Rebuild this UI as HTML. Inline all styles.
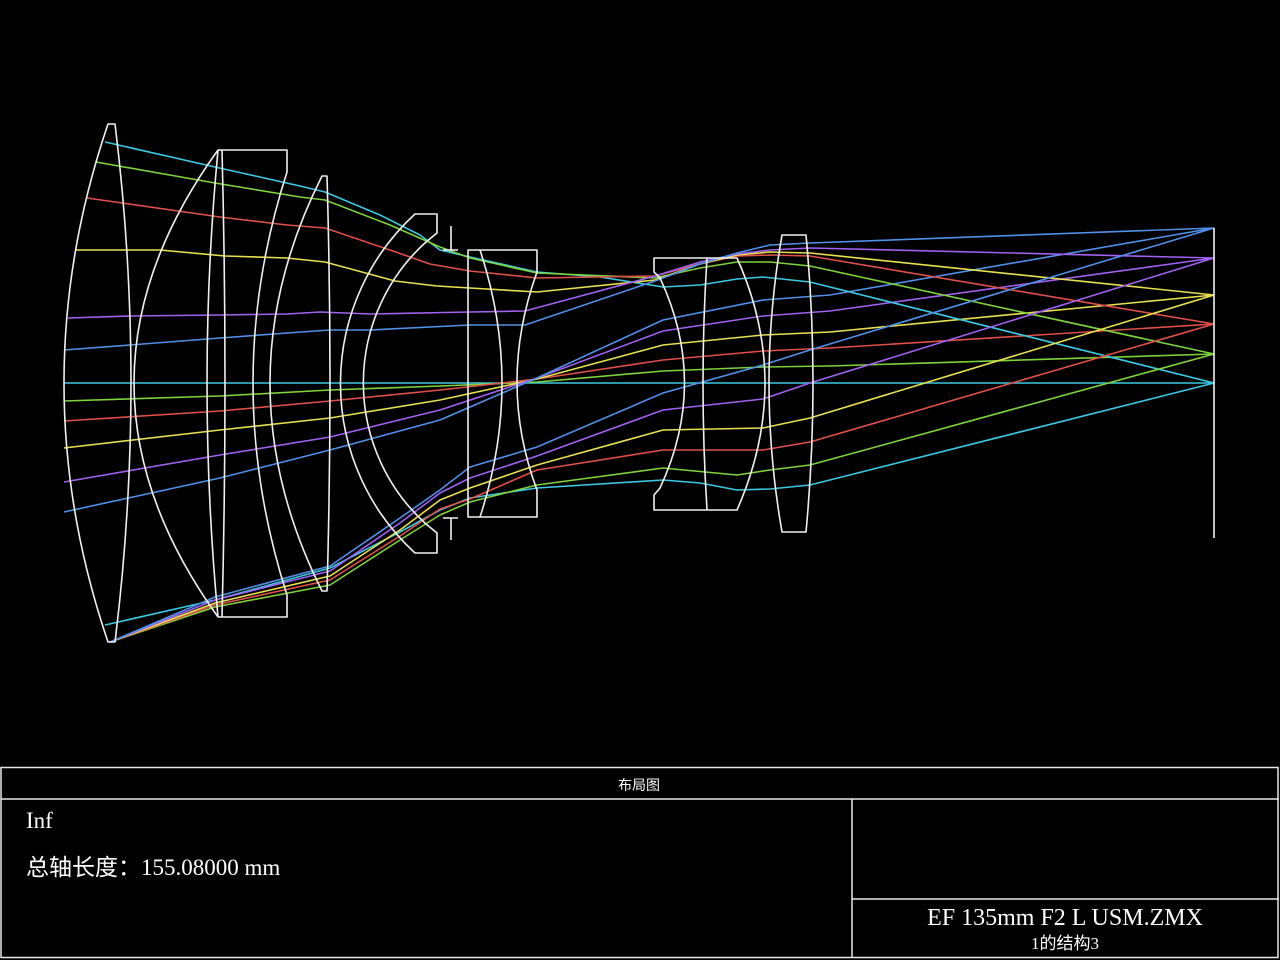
<!DOCTYPE html>
<html><head><meta charset="utf-8"><style>
html,body{margin:0;padding:0;background:#000;width:1280px;height:960px;overflow:hidden}
svg{display:block}
</style></head><body>
<svg width="1280" height="960" viewBox="0 0 1280 960" xmlns="http://www.w3.org/2000/svg">
<rect width="1280" height="960" fill="#000"/>
<g fill="none" stroke-width="1.6" stroke-linejoin="round">
<polyline stroke="#3cc8e0" points="64,383 1214,383"/>
<polyline stroke="#7ed23c" points="64,401 220,396 330,390 440,386 537,382 663,371 763,367 830,366 1214,354"/>
<polyline stroke="#e0504a" points="64,421 220,411 330,401 440,390 537,379 663,360 763,351 830,348 1214,324"/>
<polyline stroke="#e8e050" points="64,448 220,430 330,418 440,400 537,379 663,345 763,335 830,332 1214,295"/>
<polyline stroke="#a060f0" points="64,482 220,455 330,437 440,410 537,378 663,331 763,316 830,311 1214,258"/>
<polyline stroke="#5090e8" points="64,512 220,478 330,450 440,420 537,378 663,320 763,300 830,295 1214,228"/>
<polyline stroke="#3cc8e0" points="105,142 215,167 300,186 325,192 380,215 420,235 440,250 470,257 537,272 600,277 663,287 700,285 737,279 763,277 810,282 1214,383"/>
<polyline stroke="#7ed23c" points="96,162 215,183 300,197 325,200 390,225 440,247 470,258 537,273 655,278 700,268 737,262 770,262 810,266 1214,354"/>
<polyline stroke="#e0504a" points="87,198 220,217 287,225 325,228 390,250 430,264 470,271 537,278 655,276 700,264 737,256 770,255 810,256 1214,324"/>
<polyline stroke="#e8e050" points="76,250 160,250 225,256 287,258 325,262 395,281 437,286 470,288 537,292 655,280 700,264 737,255 770,252 810,253 1214,295"/>
<polyline stroke="#a060f0" points="68,318 130,316 220,315 287,314 320,312 370,314 470,312 525,311 655,276 700,262 737,254 770,250 810,248 1214,258"/>
<polyline stroke="#5090e8" points="64,350 130,345 220,338 287,333 330,330 370,330 470,325 525,325 655,281 700,264 737,253 770,245 810,243 1214,228"/>
<polyline stroke="#3cc8e0" points="105,625 215,600 287,580 330,568 400,532 440,510 470,498 537,488 663,480 700,483 737,490 770,489 810,485 1214,383"/>
<polyline stroke="#7ed23c" points="110,642 215,607 330,585 400,540 440,515 470,502 537,485 663,468 737,475 770,470 810,465 1214,354"/>
<polyline stroke="#e0504a" points="110,642 215,605 330,580 400,536 440,509 470,499 537,470 663,450 763,450 810,442 1214,324"/>
<polyline stroke="#e8e050" points="110,642 215,603 330,576 400,530 440,500 470,488 537,465 663,430 763,428 810,418 1214,295"/>
<polyline stroke="#a060f0" points="110,642 215,600 330,571 400,523 440,493 470,478 537,456 663,410 763,399 810,383 1214,258"/>
<polyline stroke="#5090e8" points="110,642 215,597 330,566 400,518 440,490 470,467 537,447 663,393 763,365 810,350 1214,228"/>
</g>
<g fill="none" stroke="#f0f0f0" stroke-width="1.6" stroke-linejoin="round">
<path d="M108,124 L115,124 Q147,383 115,642 L108,642 Q20,383 108,124 Z"/>
<path d="M218,150 Q50,383 218,617"/>
<path d="M218,150 Q196,383 218,617"/>
<path d="M218,150 L222,150 L287,150 L287,172 Q219,383 287,595 L287,617 L218,617"/>
<path d="M222,150 Q228,383 222,617"/>
<path d="M322,176 L327,176 Q333,383 327,591 L322,591 Q218,383 322,176 Z"/>
<path d="M415,214 L437,214 L437,233 L426,242 A190,190 0 0 0 426,524 L437,533 L437,553 L415,553 A230,230 0 0 1 415,214 Z"/>
<path d="M451,226 L451,250 M443,250 L458,250 M451,518 L451,540 M443,518 L458,518"/>
<path d="M468,250 L537,250 L537,272 Q497,383 537,490 L537,517 L468,517 Z"/>
<path d="M480,250 Q524,383 480,517"/>
<path d="M654,258 L737,258 Q793,383 737,510 L654,510 L654,495 L660,488 Q709,383 660,278 L654,272 Z"/>
<path d="M707,258 Q699,383 707,510"/>
<path d="M782,235 L806,235 Q820,383 806,532 L782,532 Q756,383 782,235 Z"/>
<path d="M1214,228 L1214,538"/>
</g>
<g fill="none" stroke="#e8e8e8" stroke-width="1.5">
<rect x="1" y="767.5" width="1277" height="190"/>
<line x1="1" y1="799" x2="1279" y2="799"/>
<line x1="852" y1="799" x2="852" y2="958"/>
<line x1="852" y1="899" x2="1279" y2="899"/>
</g>
<g fill="#fff">
<text x="639" y="790" font-family="'Liberation Sans','Noto Sans CJK SC',sans-serif" font-size="14" text-anchor="middle">布局图</text>
<text x="26" y="828" font-family="'Liberation Serif','Noto Serif CJK SC',serif" font-size="23">Inf</text>
<text x="26" y="875" font-family="'Liberation Serif','Noto Sans CJK SC',serif" font-size="23">总轴长度：155.08000 mm</text>
<text x="1065" y="925" font-family="'Liberation Serif',serif" font-size="24" text-anchor="middle">EF 135mm F2 L USM.ZMX</text>
<text x="1065" y="949" font-family="'Liberation Serif','Noto Sans CJK SC',serif" font-size="17" text-anchor="middle">1的结构3</text>
</g>
</svg>
</body></html>
